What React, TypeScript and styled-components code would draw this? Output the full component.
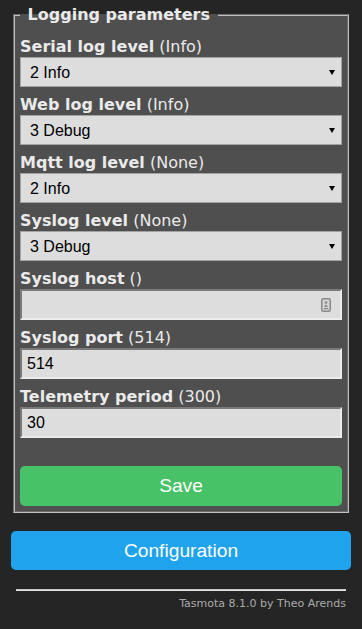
import React from "react";
import styled, { createGlobalStyle } from "styled-components";

const GlobalStyle = createGlobalStyle`
  html, body { background: #252525; }
  body {
    margin: 5px 8px 8px;
    text-align: center;
    font-family: "DejaVu Sans", Verdana, sans-serif;
    font-size: 16px;
    line-height: 19.4px;
  }
  * { box-sizing: border-box; }
`;

const Container = styled.div`
  display: inline-block;
  text-align: left;
  color: #eaeaea;
  width: 340px;
  min-width: 340px;
`;

const Fieldset = styled.fieldset`
  background: #4f4f4f;
  margin: 0 2px;
  padding: 5px;
  border: 2px groove #c0c0c0;
  min-width: 0;
`;

const Legend = styled.legend`
  padding: 0 2px;
  font-weight: bold;
  line-height: 19.4px;
`;

const Field = styled.p`
  margin: 8px 0;
  line-height: 19.4px;
`;

const SelectWrap = styled.div`
  position: relative;
  height: 30.6px;
  &::after {
    content: "";
    position: absolute;
    right: 7px;
    top: 13px;
    border-left: 3px solid transparent;
    border-right: 3px solid transparent;
    border-top: 5px solid #000;
    pointer-events: none;
  }
`;

const Select = styled.select`
  appearance: none;
  -webkit-appearance: none;
  display: block;
  width: 100%;
  height: 30.6px;
  margin: 0;
  padding: 0 20px 0 9px;
  font-family: "Liberation Sans", Arial, sans-serif;
  font-size: 16px;
  color: #000;
  background: #dddddd;
  border: 1px solid #a3a3a3;
  border-radius: 0;
  outline: none;
`;

const InputWrap = styled.div`
  position: relative;
  height: 31.6px;
`;

const Input = styled.input`
  display: block;
  width: 100%;
  height: 31.6px;
  margin: 0;
  padding: 5px;
  font-family: "Liberation Sans", Arial, sans-serif;
  font-size: 16px;
  color: #000;
  background: #dddddd;
  border-width: 2px;
  border-style: solid;
  border-color: #7a7a7a #ececec #ececec #7a7a7a;
  border-radius: 0;
  outline: none;
`;

const FieldIcon = styled.svg`
  position: absolute;
  right: 11px;
  top: 9px;
  width: 10px;
  height: 14px;
`;

const Spacer = styled.div`
  height: 19.4px;
`;

const Button = styled.button<{ $bg: string; $h: number }>`
  display: block;
  width: 100%;
  height: ${(p) => p.$h}px;
  border: 0;
  border-radius: 0.3rem;
  background: ${(p) => p.$bg};
  color: #fff;
  font-family: "Liberation Sans", Arial, sans-serif;
  font-size: 19.2px;
  line-height: ${(p) => p.$h}px;
  padding: 0;
  cursor: pointer;
`;

const ConfigRow = styled.div`
  margin-top: 18px;
`;

const Footer = styled.div`
  text-align: right;
  font-size: 11px;
  line-height: 13.4px;
  padding: 0 5px;
  margin-top: 19px;
`;

const Rule = styled.hr`
  height: 0;
  margin: 0 0 5.5px;
  border: 0;
  border-top: 1px solid #c9c9c9;
  border-bottom: 1px solid #e2e2e2;
`;

const Credit = styled.a`
  color: #aaa;
  text-decoration: none;
`;

const selects = [
  { label: "Serial log level", cur: "(Info)", value: "2 Info" },
  { label: "Web log level", cur: "(Info)", value: "3 Debug" },
  { label: "Mqtt log level", cur: "(None)", value: "2 Info" },
  { label: "Syslog level", cur: "(None)", value: "3 Debug" },
];

const levels = ["0 None", "1 Error", "2 Info", "3 Debug", "4 More debug"];

const AutofillIcon = () => (
  <FieldIcon viewBox="0 0 10 14">
    <rect x="0.75" y="0.75" width="8.5" height="12.5" rx="1.5" fill="#d4d4d4" stroke="#8a8a8a" strokeWidth="1.5" />
    <circle cx="5" cy="4.6" r="1.3" fill="#8a8a8a" />
    <path d="M3 9 L5 6.2 L7 9 Z" fill="#8a8a8a" />
    <rect x="2.8" y="10" width="4.4" height="1.2" fill="#8a8a8a" />
  </FieldIcon>
);

export default function App() {
  return (
    <>
      <GlobalStyle />
      <Container>
        <Fieldset>
          <Legend>&nbsp;Logging parameters&nbsp;</Legend>
          <form onSubmit={(e) => e.preventDefault()}>
            {selects.map((s) => (
              <Field key={s.label}>
                <b>{s.label}</b> {s.cur}
                <br />
                <SelectWrap>
                  <Select defaultValue={s.value}>
                    {levels.map((l) => (
                      <option key={l} value={l}>
                        {l}
                      </option>
                    ))}
                  </Select>
                </SelectWrap>
              </Field>
            ))}
            <Field>
              <b>Syslog host</b> ()
              <br />
              <InputWrap>
                <Input defaultValue="" />
                <AutofillIcon />
              </InputWrap>
            </Field>
            <Field>
              <b>Syslog port</b> (514)
              <br />
              <InputWrap>
                <Input defaultValue="514" />
              </InputWrap>
            </Field>
            <Field>
              <b>Telemetry period</b> (300)
              <br />
              <InputWrap>
                <Input defaultValue="30" />
              </InputWrap>
            </Field>
            <Spacer />
            <Button type="submit" $bg="#47c266" $h={40}>
              Save
            </Button>
          </form>
        </Fieldset>
        <ConfigRow>
          <Button type="button" $bg="#1fa3ec" $h={39.5}>
            Configuration
          </Button>
        </ConfigRow>
        <Footer>
          <Rule />
          <Credit href="#">Tasmota 8.1.0 by Theo Arends</Credit>
        </Footer>
      </Container>
    </>
  );
}
